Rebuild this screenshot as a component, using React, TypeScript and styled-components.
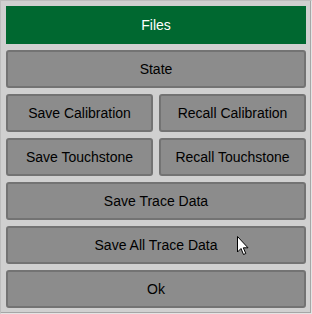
import React from "react";
import styled, { createGlobalStyle } from "styled-components";

const Global = createGlobalStyle`
  html, body { margin: 0; padding: 0; background: #d0d0d0; }
  #root { width: 312px; height: 314px; }
`;

const Dialog = styled.div`
  position: relative;
  box-sizing: border-box;
  width: 312px;
  height: 314px;
  padding: 5px;
  background: #d0d0d0;
  border-top: 1px solid #bdbdbd;
  border-left: 1px solid #bdbdbd;
  border-right: 1px solid #e4e4e4;
  border-bottom: 1px solid #e4e4e4;
  box-shadow: inset -1px -1px 0 #a6a6a6;
  display: flex;
  flex-direction: column;
  gap: 6px;
  font-family: "Liberation Sans", Arial, sans-serif;
`;

const Header = styled.div`
  height: 38px;
  background: #006830;
  color: #ffffff;
  font-size: 14px;
  display: flex;
  align-items: center;
  justify-content: center;
`;

const Row = styled.div`
  display: grid;
  grid-template-columns: 1fr 1fr;
  gap: 6px;
`;

const Button = styled.button`
  box-sizing: border-box;
  height: 38px;
  width: 100%;
  margin: 0;
  padding: 0;
  background: #8c8c8c;
  border: 2px solid #737373;
  border-radius: 3px;
  color: #000000;
  font-family: "Liberation Sans", Arial, sans-serif;
  font-size: 14px;
  display: flex;
  align-items: center;
  justify-content: center;
`;

const Cursor = styled.svg`
  position: absolute;
  left: 236px;
  top: 235px;
  pointer-events: none;
`;

export default function App() {
  return (
    <>
      <Global />
      <Dialog>
        <Header>Files</Header>
        <Button>State</Button>
        <Row>
          <Button>Save Calibration</Button>
          <Button>Recall Calibration</Button>
        </Row>
        <Row>
          <Button>Save Touchstone</Button>
          <Button>Recall Touchstone</Button>
        </Row>
        <Button>Save Trace Data</Button>
        <Button>Save All Trace Data</Button>
        <Button>Ok</Button>
        <Cursor width="13" height="20" viewBox="0 0 13 20">
          <path
            d="M0.5 0.5 L0.5 16 L4 12.5 L6.5 18.5 L8.8 17.5 L6.3 11.8 L11 11.8 Z"
            fill="#ffffff"
            stroke="#000000"
            strokeWidth="1"
            strokeLinejoin="miter"
          />
        </Cursor>
      </Dialog>
    </>
  );
}
